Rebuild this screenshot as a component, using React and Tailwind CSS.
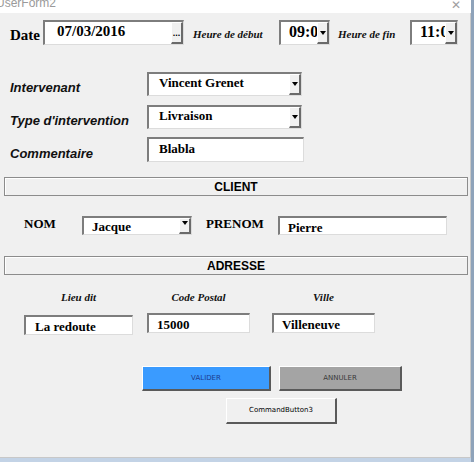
import React from "react";

const serif = { fontFamily: '"Liberation Serif", "Times New Roman", serif' };
const sans = { fontFamily: '"Liberation Sans", Arial, sans-serif' };
const pixel = { fontFamily: '"DejaVu Sans", "Liberation Sans", sans-serif' };

const sunken =
  "bg-white border-l-2 border-t-2 border-l-[#7d7d7d] border-t-[#7d7d7d] border-r border-b border-r-[#dcdcdc] border-b-[#dcdcdc]";

// Little drop arrow used by the combo boxes
const DropButton = ({ dots = false }) => (
  <div className="w-[12px] self-stretch bg-[#f0f0f0] border-r-2 border-b-2 border-r-[#6a6a6a] border-b-[#6a6a6a] border-l border-t border-l-white border-t-white flex items-end justify-center pb-[4px]">
    {dots ? (
      <span className="text-[9px] leading-none font-bold text-black" style={sans}>
        ...
      </span>
    ) : (
      <svg width="6" height="4" viewBox="0 0 6 4" className="mb-[3px]">
        <path d="M0 0h6L3 4z" fill="#000" />
      </svg>
    )}
  </div>
);

const Combo = ({ value, width, height = 24, size = 13, pad = 10, dots = false }) => (
  <div className={`flex ${sunken}`} style={{ width, height }}>
    <div
      className="flex-1 overflow-hidden whitespace-nowrap font-bold text-black leading-none pt-[2px]"
      style={{ ...serif, fontSize: size, paddingLeft: pad }}
    >
      {value}
    </div>
    <DropButton dots={dots} />
  </div>
);

const TextBox = ({ value, width, height = 24, size = 13, pad = 10 }) => (
  <div
    className={`${sunken} font-bold text-black leading-none pt-[3px] whitespace-nowrap overflow-hidden`}
    style={{ ...serif, width, height, fontSize: size, paddingLeft: pad }}
  >
    {value}
  </div>
);

const FrameTitle = ({ children }) => (
  <div
    className="mx-[4px] w-[464px] h-[19px] border border-[#8c8c8c] shadow-[inset_1px_1px_0_#fff] flex items-center justify-center text-[12px] leading-none font-bold text-black"
    style={sans}
  >
    {children}
  </div>
);

const Label = ({ children, className = "" }) => (
  <div className={`font-bold italic text-[13px] leading-[15px] text-[#111] ${className}`} style={sans}>
    {children}
  </div>
);

const SmallItalic = ({ children, className = "" }) => (
  <div
    className={`font-bold italic text-[11px] leading-[13px] text-[#111] whitespace-nowrap ${className}`}
    style={serif}
  >
    {children}
  </div>
);

const Button = ({ children, className = "", text = "text-black" }) => (
  <div
    className={`flex items-center justify-center border-t border-l border-t-white border-l-white border-r-2 border-b-2 border-r-[#5a5a5a] border-b-[#5a5a5a] text-[7px] leading-none ${text} ${className}`}
    style={pixel}
  >
    {children}
  </div>
);

export default function App() {
  return (
    <div className="w-[474px] h-[462px] flex bg-[#c3d3e6] overflow-hidden">
      <div className="w-[471px] flex flex-col">
        {/* title bar */}
        <div className="h-[13px] bg-white relative overflow-hidden">
          <div className="absolute left-[-4px] top-[-6px] text-[12px] text-[#9a9a9a]" style={sans}>
            UserForm2
          </div>
          <div className="absolute left-[451px] top-[-4px] text-[12px] text-[#a0a0a0]" style={sans}>
            ✕
          </div>
        </div>

        {/* form body */}
        <div className="h-[445px] bg-[#f0f0f0] border-r border-b border-[#c8c8c8] flex flex-col">
          {/* date / hours */}
          <div className="flex items-center h-[25px] mt-[7px]">
            <div className="ml-[10px] w-[33px] pt-[5px] text-[15px] leading-[17px] font-bold text-black" style={serif}>
              Date
            </div>
            <Combo value="07/03/2016" width={141} height={25} size={15} pad={12} dots />
            <SmallItalic className="ml-[9px] w-[86px] pt-[3px]">Heure de début</SmallItalic>
            <Combo value="09:0" width={51} height={25} size={16} pad={8} />
            <SmallItalic className="ml-[8px] w-[72px] pt-[3px]">Heure de fin</SmallItalic>
            <Combo value="11:0" width={48} height={25} size={16} pad={8} />
          </div>

          <div className="flex items-center h-[24px] mt-[27px]">
            <Label className="ml-[10px] w-[137px] pt-[6px]">Intervenant</Label>
            <Combo value="Vincent Grenet" width={155} height={24} />
          </div>
          <div className="flex items-center h-[24px] mt-[9px]">
            <Label className="ml-[10px] w-[137px] pt-[6px]">Type d'intervention</Label>
            <Combo value="Livraison" width={155} height={24} />
          </div>
          <div className="flex items-center h-[25px] mt-[8px]">
            <Label className="ml-[10px] w-[137px] pt-[8px]">Commentaire</Label>
            <TextBox value="Blabla" width={157} height={25} />
          </div>

          <div className="mt-[15px]">
            <FrameTitle>CLIENT</FrameTitle>
          </div>

          <div className="flex items-center mt-[20px] h-[19px]">
            <div className="ml-[24px] w-[58px] text-[13px] leading-[15px] font-bold text-black pb-[4px]" style={serif}>
              NOM
            </div>
            <Combo value="Jacque" width={110} height={19} pad={8} />
            <div className="ml-[14px] w-[72px] text-[13px] leading-[15px] font-bold text-black pb-[4px]" style={serif}>
              PRENOM
            </div>
            <TextBox value="Pierre" width={169} height={19} pad={8} />
          </div>

          <div className="mt-[21px]">
            <FrameTitle>ADRESSE</FrameTitle>
          </div>

          <div className="flex mt-[16px] h-[12px]">
            <SmallItalic className="ml-[24px] w-[109px] text-center text-[10px]">Lieu dit</SmallItalic>
            <SmallItalic className="ml-[14px] w-[103px] text-center text-[10px]">Code Postal</SmallItalic>
            <SmallItalic className="ml-[22px] w-[103px] text-center text-[10px]">Ville</SmallItalic>
          </div>

          <div className="flex items-start mt-[10px]">
            <div className="ml-[24px] mt-[2px]">
              <TextBox value="La redoute" width={109} height={20} pad={9} />
            </div>
            <div className="ml-[14px]">
              <TextBox value="15000" width={103} height={20} pad={8} />
            </div>
            <div className="ml-[22px]">
              <TextBox value="Villeneuve" width={103} height={20} pad={8} />
            </div>
          </div>

          <div className="flex mt-[31px] h-[25px]">
            <Button className="ml-[142px] w-[129px] bg-[#3a9bff]" text="text-[#1c3d8f]">
              VALIDER
            </Button>
            <Button className="ml-[8px] w-[123px] bg-[#a4a4a4]" text="text-[#3a3a3a]">
              ANNULER
            </Button>
          </div>
          <div className="flex mt-[7px] h-[26px]">
            <Button className="ml-[226px] w-[111px] bg-[#f0f0f0]">CommandButton3</Button>
          </div>
        </div>
      </div>
      <div className="w-[3px] bg-[#8fa3ba]" />
    </div>
  );
}
